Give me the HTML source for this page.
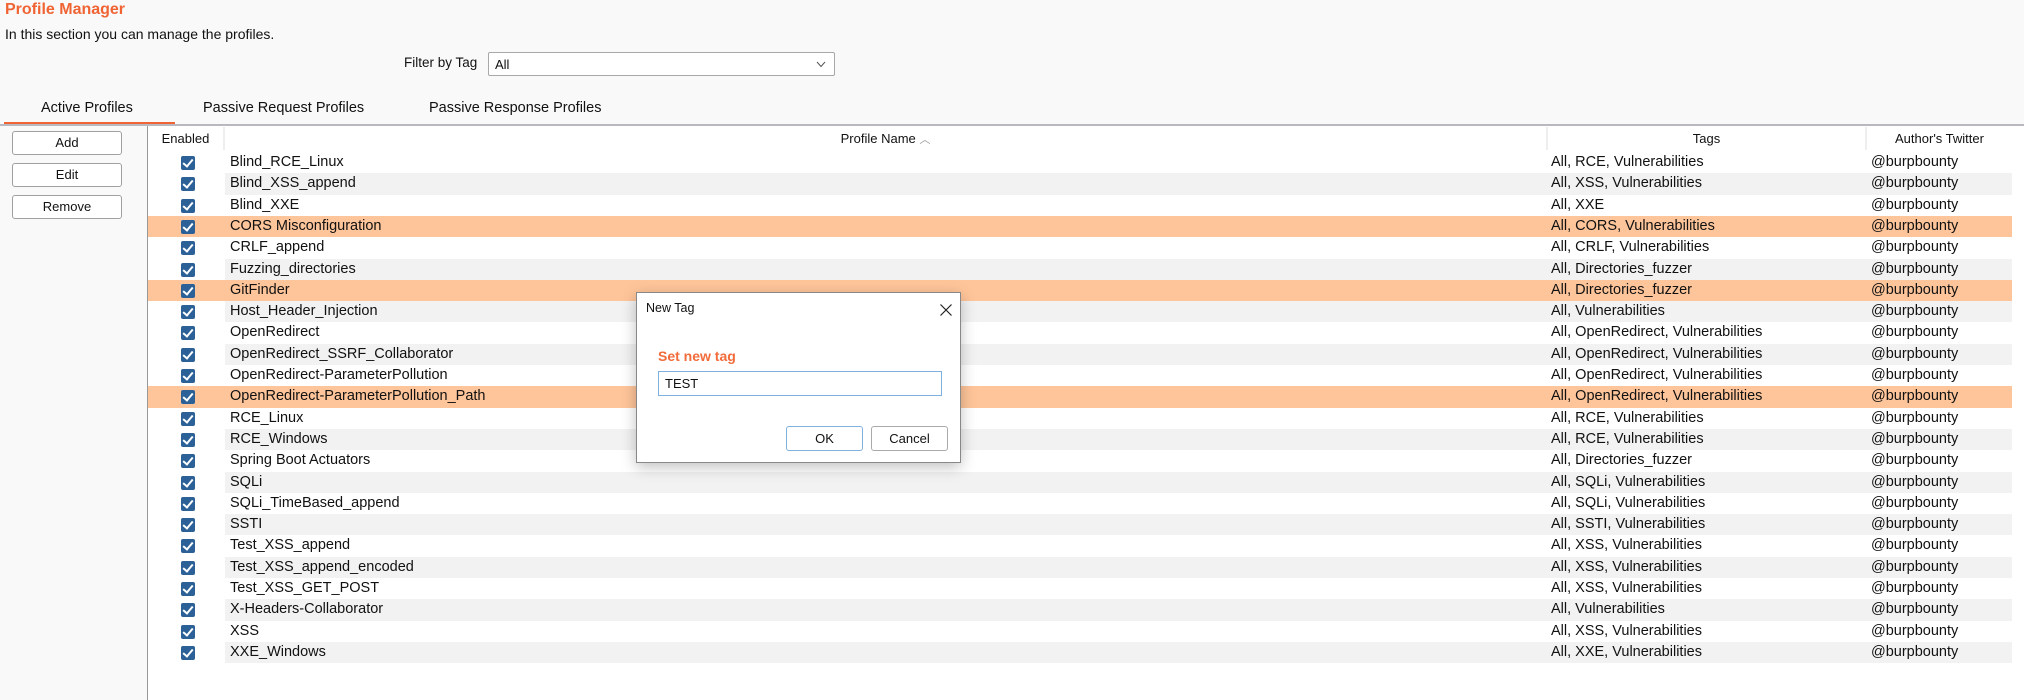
<!DOCTYPE html>
<html><head><meta charset="utf-8"><style>
*{margin:0;padding:0;box-sizing:border-box}
body{width:2024px;height:700px;background:#f9f9f9;font-family:"Liberation Sans",Arial,sans-serif;color:#111;position:relative;overflow:hidden}
.a{position:absolute}
.title{left:5px;top:1px;font-size:16px;font-weight:bold;color:#f06434}
.sub{left:5px;top:26px;font-size:14px}
.lbl{left:404px;top:55px;font-size:13.5px}
.combo{left:488px;top:52px;width:347px;height:24px;background:#fff;border:1px solid #a8a8a8;border-radius:2px;font-size:13px;padding:4px 6px}
.tab{top:100px;font-size:14.5px}
.btn{left:12px;width:110px;height:24px;border:1px solid #a0a0a0;border-radius:3px;background:#fff;font-size:13px;text-align:center;line-height:22px}
.tbl{left:147px;top:126px;width:1877px;height:574px;background:#fff;border-left:1px solid #999}
.hd{position:absolute;top:1px;height:23px;font-size:13px;line-height:23px;text-align:center;border-right:2px solid #eee;background:#fff}
.row{position:absolute;left:0;width:1864px;height:21.3px;font-size:14.5px;line-height:21px}
.row span{position:absolute;top:0}
.cb{position:absolute;left:33px;top:4px;width:14px;height:14px;background:#2b6197;border-radius:2px}
.cb:after{content:"";position:absolute;left:4px;top:1px;width:4px;height:8px;border:solid #fff;border-width:0 2px 2px 0;transform:rotate(40deg)}
.dlg{left:636px;top:292px;width:325px;height:171px;background:#fff;border:1px solid #888;box-shadow:0 4px 14px rgba(0,0,0,.25)}
</style></head><body>
<div class="a title">Profile Manager</div>
<div class="a sub">In this section you can manage the profiles.</div>
<div class="a lbl">Filter by Tag</div>
<div class="a combo">All<svg class="a" style="right:8px;top:8px" width="10" height="7"><path d="M1 1 L5 5.5 L9 1" fill="none" stroke="#555" stroke-width="1"/></svg></div>
<div class="a tab" style="left:41px">Active Profiles</div>
<div class="a tab" style="left:203px">Passive Request Profiles</div>
<div class="a tab" style="left:429px">Passive Response Profiles</div>
<div class="a" style="left:4px;top:122px;width:171px;height:3px;background:#f06434"></div>
<div class="a" style="left:0;top:124px;width:2024px;height:2px;background:#b8b8c0"></div>
<div class="a btn" style="top:131px">Add</div>
<div class="a btn" style="top:163px">Edit</div>
<div class="a btn" style="top:195px">Remove</div>
<div class="a tbl">
<div class="hd" style="left:0;width:77px">Enabled</div>
<div class="hd" style="left:77px;width:1323px">Profile Name <span style="color:#999;font-size:11px">︿</span></div>
<div class="hd" style="left:1400px;width:319px">Tags</div>
<div class="hd" style="left:1719px;width:145px;border-right:none">Author's Twitter</div>
<div id="rows"></div>
</div>
<div class="a dlg">
<div class="a" style="left:9px;top:8px;font-size:12.5px">New Tag</div>
<svg class="a" style="left:303px;top:11px" width="12" height="12"><path d="M0.5 0.5L11.5 11.5M11.5 0.5L0.5 11.5" stroke="#222" stroke-width="1.2"/></svg>
<div class="a" style="left:21px;top:55px;font-size:14px;font-weight:bold;color:#f26b3a">Set new tag</div>
<div class="a" style="left:21px;top:78px;width:284px;height:25px;border:1px solid #7fb0e0;font-size:13px;padding:4px 6px">TEST</div>
<div class="a" style="left:149px;top:133px;width:77px;height:25px;border:1px solid #7fb0e0;border-radius:3px;text-align:center;line-height:23px;font-size:13px">OK</div>
<div class="a" style="left:234px;top:133px;width:77px;height:25px;border:1px solid #aaa;border-radius:3px;text-align:center;line-height:23px;font-size:13px">Cancel</div>
</div>
<script>
var d=[["Blind_RCE_Linux","All, RCE, Vulnerabilities"],["Blind_XSS_append","All, XSS, Vulnerabilities"],["Blind_XXE","All, XXE"],["CORS Misconfiguration","All, CORS, Vulnerabilities"],["CRLF_append","All, CRLF, Vulnerabilities"],["Fuzzing_directories","All, Directories_fuzzer"],["GitFinder","All, Directories_fuzzer"],["Host_Header_Injection","All, Vulnerabilities"],["OpenRedirect","All, OpenRedirect, Vulnerabilities"],["OpenRedirect_SSRF_Collaborator","All, OpenRedirect, Vulnerabilities"],["OpenRedirect-ParameterPollution","All, OpenRedirect, Vulnerabilities"],["OpenRedirect-ParameterPollution_Path","All, OpenRedirect, Vulnerabilities"],["RCE_Linux","All, RCE, Vulnerabilities"],["RCE_Windows","All, RCE, Vulnerabilities"],["Spring Boot Actuators","All, Directories_fuzzer"],["SQLi","All, SQLi, Vulnerabilities"],["SQLi_TimeBased_append","All, SQLi, Vulnerabilities"],["SSTI","All, SSTI, Vulnerabilities"],["Test_XSS_append","All, XSS, Vulnerabilities"],["Test_XSS_append_encoded","All, XSS, Vulnerabilities"],["Test_XSS_GET_POST","All, XSS, Vulnerabilities"],["X-Headers-Collaborator","All, Vulnerabilities"],["XSS","All, XSS, Vulnerabilities"],["XXE_Windows","All, XXE, Vulnerabilities"]];
var h="",hl={3:1,6:1,11:1};
d.forEach(function(r,i){var top=26+i*21.3;var bg=hl[i]?"#ffc59a":"#fff";
var st=(!hl[i]&&i%2==1)?'<div style="position:absolute;left:77px;top:0;width:1787px;height:100%;background:#f2f2f2"></div>':'';
h+='<div class="row" style="top:'+top+'px;background:'+bg+'">'+st+'<div class="cb"></div><span style="left:82px">'+r[0]+'</span><span style="left:1403px">'+r[1]+'</span><span style="left:1723px">@burpbounty</span></div>';});
document.getElementById("rows").innerHTML=h;
</script>
</body></html>
